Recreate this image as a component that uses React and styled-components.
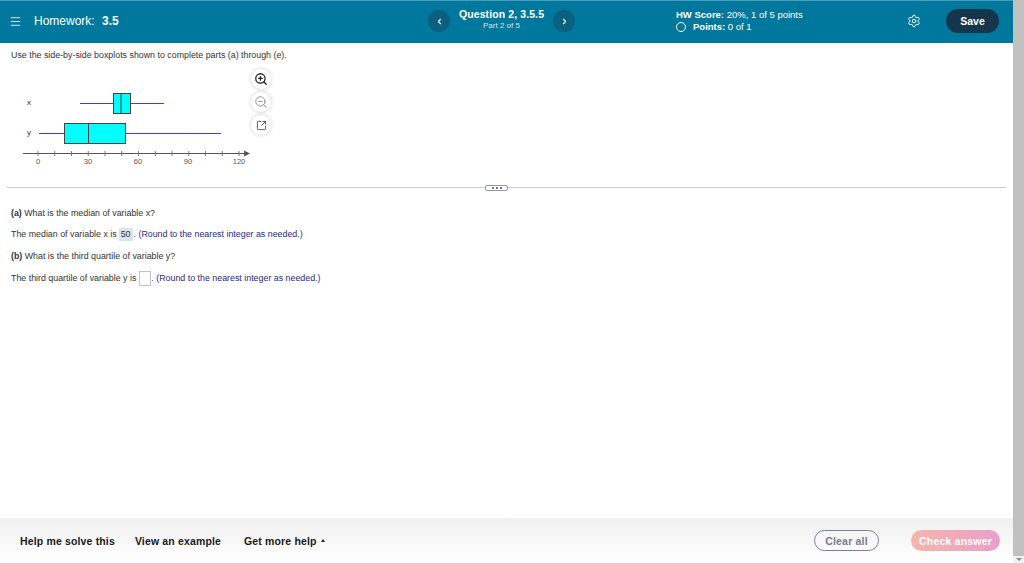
import React from "react";
import styled, { createGlobalStyle } from "styled-components";
import { ChevronLeft, ChevronRight, Menu, Settings, SquareArrowOutUpRight, ZoomIn, ZoomOut } from "lucide-react";

const Global = createGlobalStyle`
  html, body {
    margin: 0;
    height: 100%;
    overflow: hidden;
    background: #fff;
    font-family: "Liberation Sans", Arial, sans-serif;
  }
`;

const Page = styled.div`
  display: flex;
  width: 1024px;
  height: 563px;
`;

const Main = styled.div`
  width: 1013px;
  display: flex;
  flex-direction: column;
`;

const Header = styled.header`
  height: 43px;
  box-sizing: border-box;
  border-top: 1px solid #4b9cb6;
  background: #00789e;
  color: #fff;
  display: flex;
  align-items: center;
  padding: 0 0 2px 9px;
`;

const HomeTitle = styled.div`
  width: 419px;
  display: flex;
  align-items: center;
  font-size: 12px;
  gap: 12px;
  b {
    margin-left: 4px;
  }
`;

const NavButton = styled.div`
  width: 22px;
  height: 22px;
  border-radius: 50%;
  background: #0b5f7f;
  display: flex;
  align-items: center;
  justify-content: center;
`;

const QuestionInfo = styled.div`
  width: 103px;
  padding-bottom: 3px;
  text-align: center;
  b {
    display: block;
    font-size: 10.5px;
    line-height: 12px;
    letter-spacing: 0.1px;
  }
  span {
    display: block;
    margin-top: 1px;
    font-size: 8px;
    line-height: 10px;
    color: #d5e6ec;
  }
`;

const Score = styled.div`
  margin-left: 101px;
  width: 231px;
  font-size: 9.5px;
  line-height: 12.5px;
`;

const PointsRow = styled.div`
  display: flex;
  align-items: center;
  gap: 7px;
`;

const Circle = styled.i`
  width: 8px;
  height: 8px;
  border: 1.5px solid #fff;
  border-radius: 50%;
`;

const SaveButton = styled.div`
  margin-left: 25px;
  width: 53px;
  height: 24px;
  border-radius: 12px;
  background: #14364c;
  font-size: 10.5px;
  font-weight: bold;
  display: flex;
  align-items: center;
  justify-content: center;
`;

const Content = styled.main`
  flex: 1;
  min-height: 0;
`;

const Prompt = styled.p`
  margin: 0;
  padding: 7px 0 0 11px;
  font-size: 8.85px;
  line-height: 11px;
  color: #333;
`;

const Figure = styled.div`
  display: flex;
  height: 118px;
  padding: 8px 0 0 10px;
`;

const Tools = styled.div`
  margin-left: 1px;
  width: 20px;
  display: flex;
  flex-direction: column;
  gap: 3px;
`;

const ToolButton = styled.div`
  width: 20px;
  height: 20px;
  border-radius: 50%;
  background: #fff;
  box-shadow: 0 0 4px rgba(0, 0, 0, 0.2);
  display: flex;
  align-items: center;
  justify-content: center;
  color: ${p => (p.$muted ? "#8d8d8d" : "#222")};
`;

const Divider = styled.div`
  margin-left: 7px;
  width: 999px;
  height: 1px;
  background: #c9ccd1;
  display: flex;
  align-items: center;
  padding-left: 478px;
  box-sizing: border-box;
`;

const Handle = styled.div`
  width: 21px;
  height: 4px;
  border: 1px solid #8f9aa8;
  border-radius: 2px;
  background: #fff;
  display: flex;
  align-items: center;
  justify-content: center;
  gap: 2px;
  i {
    width: 2px;
    height: 2px;
    background: #777;
  }
`;

const Questions = styled.div`
  padding: 13px 0 0 11px;
`;

const Line = styled.div`
  height: 22px;
  box-sizing: border-box;
  display: flex;
  align-items: center;
  font-size: 8.85px;
  color: #333;
  white-space: pre;
  b {
    font-weight: bold;
  }
  &:first-child {
    padding-top: 1px;
  }
`;

const Filled = styled.span`
  margin: 0 1px 0 2px;
  padding: 0 2px;
  height: 13px;
  line-height: 13px;
  background: #dbe3ee;
`;

const Blank = styled.span`
  margin-left: 3px;
  width: 10px;
  height: 13px;
  border: 1px solid #b7c5db;
`;

const Hint = styled.span`
  color: #2a1f86;
`;

const Footer = styled.footer`
  height: 45px;
  box-sizing: border-box;
  background: linear-gradient(#f0f0f0, #fff);
  display: flex;
  align-items: center;
  padding: 0 13px 0 20px;
`;

const HelpLink = styled.div`
  margin-right: 20px;
  margin-left: ${p => (p.$last ? "3px" : "0")};
  font-size: 10.5px;
  font-weight: bold;
  letter-spacing: 0.15px;
  color: #1a1a1a;
  display: flex;
  align-items: center;
  gap: 4px;
`;

const Caret = styled.i`
  border-left: 2.5px solid transparent;
  border-right: 2.5px solid transparent;
  border-bottom: 3px solid #222;
`;

const ClearButton = styled.div`
  margin-left: auto;
  width: 65px;
  height: 21px;
  box-sizing: border-box;
  border: 1px solid #7c8192;
  border-radius: 11px;
  font-size: 10.5px;
  font-weight: bold;
  letter-spacing: 0.2px;
  color: #777c8b;
  display: flex;
  align-items: center;
  justify-content: center;
`;

const CheckButton = styled.div`
  margin-left: 32px;
  width: 89px;
  height: 21px;
  border-radius: 11px;
  background: linear-gradient(90deg, #f5b6ab, #ea9fcb);
  font-size: 10.5px;
  font-weight: bold;
  letter-spacing: 0.2px;
  color: #fff;
  display: flex;
  align-items: center;
  justify-content: center;
`;

const Scrollbar = styled.div`
  width: 11px;
  display: flex;
  flex-direction: column;
  background: #f1f1f1;
`;

const Thumb = styled.div`
  flex: 1;
  background: #c1c1c1;
`;

const ArrowCell = styled.div`
  height: 7px;
  display: flex;
  align-items: center;
  justify-content: center;
  i {
    border-left: 3px solid transparent;
    border-right: 3px solid transparent;
    border-top: 3px solid #8a8a8a;
  }
`;

// scale from the screenshot: x value 0 is at 28, 30 units are 50px
const ticks = Array.from({ length: 13 }, (_, i) => 28 + i * 16.75);
const labels = [["0", 28], ["30", 78], ["60", 128], ["90", 178], ["120", 229]];

function BoxPlot() {
  return (
    <svg width="240" height="110" viewBox="0 0 240 110">
      <text x="19" y="36" fontSize="8" textAnchor="middle" fill="#333" fontFamily="Liberation Sans">x</text>
      <text x="19" y="66" fontSize="8" textAnchor="middle" fill="#333" fontFamily="Liberation Sans">y</text>

      <line x1="70" x2="154" y1="34.5" y2="34.5" stroke="#3a3aff" />
      <rect x="103.5" y="24.5" width="17" height="20" fill="#00ffff" stroke="#444" />
      <line x1="111" x2="111" y1="24.5" y2="44.5" stroke="#444" />

      <line x1="29" x2="211" y1="64.5" y2="64.5" stroke="#3a3aff" />
      <rect x="54.5" y="54.5" width="61" height="20" fill="#00ffff" stroke="#444" />
      <line x1="78.5" x2="78.5" y1="54.5" y2="74.5" stroke="#444" />

      <line x1="13" x2="235" y1="84.5" y2="84.5" stroke="#555" />
      <path d="M234 81.5 L240 84.5 L234 87.5 Z" fill="#555" />
      {ticks.map(x => (
        <line key={x} x1={x} x2={x} y1="82" y2="87" stroke="#777" />
      ))}
      {labels.map(([t, x]) => (
        <text key={t} x={x} y="94.5" fontSize="7.5" textAnchor="middle" fill="#555" fontFamily="Liberation Sans">{t}</text>
      ))}
    </svg>
  );
}

export default function App() {
  return (
    <Page>
      <Global />
      <Main>
        <Header>
          <HomeTitle>
            <Menu size={13} strokeWidth={1.5} />
            <span>Homework: <b>3.5</b></span>
          </HomeTitle>
          <NavButton><ChevronLeft size={9} strokeWidth={3} /></NavButton>
          <QuestionInfo>
            <b>Question 2, 3.5.5</b>
            <span>Part 2 of 5</span>
          </QuestionInfo>
          <NavButton><ChevronRight size={9} strokeWidth={3} /></NavButton>
          <Score>
            <div><b>HW Score:</b> 20%, 1 of 5 points</div>
            <PointsRow>
              <Circle />
              <span><b>Points:</b> 0 of 1</span>
            </PointsRow>
          </Score>
          <Settings size={14} strokeWidth={1.6} />
          <SaveButton>Save</SaveButton>
        </Header>
        <Content>
          <Prompt>Use the side-by-side boxplots shown to complete parts (a) through (e).</Prompt>
          <Figure>
            <BoxPlot />
            <Tools>
              <ToolButton><ZoomIn size={14} strokeWidth={2.2} /></ToolButton>
              <ToolButton $muted><ZoomOut size={14} strokeWidth={1.6} /></ToolButton>
              <ToolButton><SquareArrowOutUpRight size={11} strokeWidth={1.6} /></ToolButton>
            </Tools>
          </Figure>
          <Divider>
            <Handle><i /><i /><i /></Handle>
          </Divider>
          <Questions>
            <Line><b>(a)</b> What is the median of variable x?</Line>
            <Line>The median of variable x is<Filled>50</Filled>. <Hint>(Round to the nearest integer as needed.)</Hint></Line>
            <Line><b>(b)</b> What is the third quartile of variable y?</Line>
            <Line>The third quartile of variable y is<Blank />. <Hint>(Round to the nearest integer as needed.)</Hint></Line>
          </Questions>
        </Content>
        <Footer>
          <HelpLink>Help me solve this</HelpLink>
          <HelpLink>View an example</HelpLink>
          <HelpLink $last>Get more help <Caret /></HelpLink>
          <ClearButton>Clear all</ClearButton>
          <CheckButton>Check answer</CheckButton>
        </Footer>
      </Main>
      <Scrollbar>
        <Thumb />
        <ArrowCell><i /></ArrowCell>
      </Scrollbar>
    </Page>
  );
}
